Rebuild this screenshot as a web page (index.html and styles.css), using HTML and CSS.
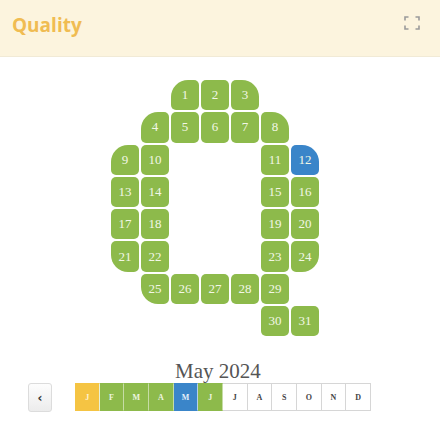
FILE: index.html
```html
<!DOCTYPE html>
<html>
<head>
<meta charset="utf-8">
<link rel="stylesheet" href="styles.css">
</head>
<body>
<div class="header">
  <div class="title">Quality</div>
  <svg class="expand" width="16" height="14" viewBox="0 0 16 14">
    <path d="M1 4.5V1h3.5M11.5 1H15v3.5M15 9.5V13h-3.5M4.5 13H1V9.5" fill="none" stroke="#9a9a9a" stroke-width="1.6"/>
  </svg>
</div>
<div class="grid">
  <div class="c g tl" style="grid-area:1/3">1</div>
  <div class="c g" style="grid-area:1/4">2</div>
  <div class="c g tr" style="grid-area:1/5">3</div>
  <div class="c g tl" style="grid-area:2/2">4</div>
  <div class="c g" style="grid-area:2/3">5</div>
  <div class="c g" style="grid-area:2/4">6</div>
  <div class="c g" style="grid-area:2/5">7</div>
  <div class="c g tr" style="grid-area:2/6">8</div>
  <div class="c g tl" style="grid-area:3/1">9</div>
  <div class="c g" style="grid-area:3/2">10</div>
  <div class="c g" style="grid-area:3/6">11</div>
  <div class="c b tr" style="grid-area:3/7">12</div>
  <div class="c g" style="grid-area:4/1">13</div>
  <div class="c g" style="grid-area:4/2">14</div>
  <div class="c g" style="grid-area:4/6">15</div>
  <div class="c g" style="grid-area:4/7">16</div>
  <div class="c g" style="grid-area:5/1">17</div>
  <div class="c g" style="grid-area:5/2">18</div>
  <div class="c g" style="grid-area:5/6">19</div>
  <div class="c g" style="grid-area:5/7">20</div>
  <div class="c g bl" style="grid-area:6/1">21</div>
  <div class="c g" style="grid-area:6/2">22</div>
  <div class="c g" style="grid-area:6/6">23</div>
  <div class="c g br" style="grid-area:6/7">24</div>
  <div class="c g bl" style="grid-area:7/2">25</div>
  <div class="c g" style="grid-area:7/3">26</div>
  <div class="c g" style="grid-area:7/4">27</div>
  <div class="c g" style="grid-area:7/5">28</div>
  <div class="c g" style="grid-area:7/6">29</div>
  <div class="c g" style="grid-area:8/6">30</div>
  <div class="c g" style="grid-area:8/7">31</div>
</div>
<div class="month">May 2024</div>
<div class="strip">
  <div class="prev">&#8249;</div>
  <div class="months">
    <div class="m y">J</div>
    <div class="m gr">F</div>
    <div class="m gr">M</div>
    <div class="m gr">A</div>
    <div class="m bl2">M</div>
    <div class="m gr">J</div>
    <div class="m w">J</div>
    <div class="m w">A</div>
    <div class="m w">S</div>
    <div class="m w">O</div>
    <div class="m w">N</div>
    <div class="m w">D</div>
  </div>
</div>
</body>
</html>
```
FILE: styles.css
```css
html, body { margin: 0; padding: 0; background: #fff; }
body { width: 440px; height: 440px; overflow: hidden; }
.header {
  height: 56px;
  background: #fcf4de;
  border-bottom: 1px solid #f1ead6;
  display: flex;
  align-items: center;
  justify-content: space-between;
  padding: 0 20px 0 12px;
}
.title {
  font-family: "Open Sans", sans-serif;
  font-weight: 700;
  font-size: 19px;
  color: #f0bc52;
  margin-top: -6px;
}
.expand { margin-top: -10px; }
.grid {
  display: grid;
  grid-template-columns: repeat(7, 28px);
  grid-template-rows: repeat(8, 30.3px);
  gap: 2px;
  margin: 23px 0 0 111px;
  width: 208px;
}
.c {
  display: flex;
  align-items: center;
  justify-content: center;
  font-family: "Liberation Serif", serif;
  font-size: 13px;
  color: #f2f7e6;
  border-radius: 5px;
}
.g { background: #8dba4b; }
.b { background: #3a85c9; }
.tl { border-top-left-radius: 17px; }
.tr { border-top-right-radius: 17px; }
.bl { border-bottom-left-radius: 17px; }
.br { border-bottom-right-radius: 17px; }
.month {
  font-family: "Liberation Serif", serif;
  font-size: 21px;
  color: #555;
  line-height: 24px;
  margin: 23px 0 0 175px;
}
.strip {
  display: flex;
  align-items: flex-start;
  padding-left: 28px;
}
.prev {
  width: 22px;
  height: 27px;
  border: 1px solid #dcdcdc;
  border-radius: 3px;
  background: linear-gradient(#fdfdfd, #ececec);
  display: flex;
  align-items: center;
  justify-content: center;
  font-family: "DejaVu Sans", sans-serif;
  font-weight: 700;
  font-size: 12px;
  color: #333;
}
.months {
  display: grid;
  grid-template-columns: repeat(12, 1fr);
  width: 296px;
  height: 28px;
  margin-left: 23px;
}
.m {
  display: flex;
  align-items: center;
  justify-content: center;
  font-family: "Liberation Serif", serif;
  font-weight: 700;
  font-size: 8px;
  border-right: 1px solid #d6d6d6;
  border-top: 1px solid #d6d6d6;
  border-bottom: 1px solid #d6d6d6;
}
.m:first-child { border-left: 1px solid #d6d6d6; }
.y { background: #f5c443; color: #fff3cf; border-color: #f5c443 #e8f0d8 #f5c443 #f5c443 !important; }
.gr { background: #8dba4b; color: #eef5e0; border-color: #8dba4b #c6dca6 #8dba4b #8dba4b; }
.bl2 { background: #3a85c9; color: #e6eff9; border-color: #3a85c9 #b6d0ea #3a85c9 #3a85c9; }
.w { background: #fff; color: #444; }
```
